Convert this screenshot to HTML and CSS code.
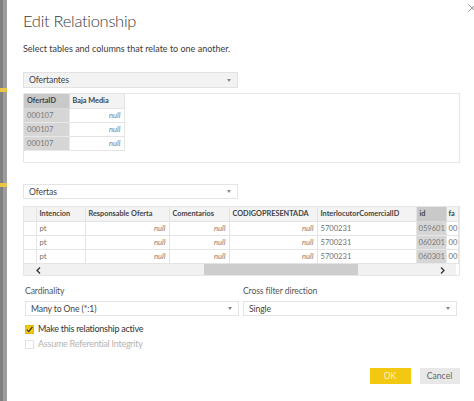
FILE: index.html
```html
<!DOCTYPE html>
<html lang="en">
<head>
<meta charset="utf-8">
<title>Edit Relationship</title>
<link rel="stylesheet" href="styles.css">
</head>
<body>
<div class="screen">
  <div class="side"></div>
  <div class="dialog">
    <button class="close" aria-label="Close">
      <svg width="8" height="8" viewBox="0 0 8 8"><path d="M0.5 0.5 L7.5 7.5 M7.5 0.5 L0.5 7.5" stroke="#8a8a8a" stroke-width="0.9" fill="none"/></svg>
    </button>
    <h1 class="title">Edit Relationship</h1>
    <p class="subtitle">Select tables and columns that relate to one another.</p>

    <div class="select select-active select-table">
      <span>Ofertantes</span>
      <svg class="caret" width="4" height="3" viewBox="0 0 4 3"><path d="M0 0 H4 L2 3 Z" fill="#888"/></svg>
    </div>
    <div class="preview preview-top">
      <table class="grid grid-top">
        <colgroup><col class="w45"><col class="w55"></colgroup>
        <thead><tr><th class="sel">OfertaID</th><th>Baja Media</th></tr></thead>
        <tbody>
          <tr><td class="sel">000107</td><td class="null">null</td></tr>
          <tr><td class="sel">000107</td><td class="null">null</td></tr>
          <tr><td class="sel">000107</td><td class="null">null</td></tr>
        </tbody>
      </table>
    </div>

    <div class="select select-table select-second">
      <span>Ofertas</span>
      <svg class="caret" width="4" height="3" viewBox="0 0 4 3"><path d="M0 0 H4 L2 3 Z" fill="#888"/></svg>
    </div>
    <div class="preview preview-bottom">
      <table class="grid grid-bottom">
        <colgroup>
          <col class="w12"><col class="w49"><col class="w84"><col class="w60"><col class="w88"><col class="w99"><col class="w30"><col class="w12">
        </colgroup>
        <thead><tr><th></th><th>Intencion</th><th>Responsable Oferta</th><th>Comentarios</th><th>CODIGOPRESENTADA</th><th>InterlocutorComercialID</th><th class="sel">id</th><th class="clip">fa</th></tr></thead>
        <tbody>
          <tr><td></td><td>pt</td><td class="null">null</td><td class="null">null</td><td class="null">null</td><td>5700231</td><td class="sel num">059601</td><td class="clip">00</td></tr>
          <tr><td></td><td>pt</td><td class="null">null</td><td class="null">null</td><td class="null">null</td><td>5700231</td><td class="sel num">060201</td><td class="clip">00</td></tr>
          <tr><td></td><td>pt</td><td class="null">null</td><td class="null">null</td><td class="null">null</td><td>5700231</td><td class="sel num">060301</td><td class="clip">00</td></tr>
        </tbody>
      </table>
      <div class="hscroll">
        <svg class="arrow" width="5" height="7" viewBox="0 0 5 7"><path d="M4 0.5 L1 3.5 L4 6.5" stroke="#333" stroke-width="1.3" fill="none"/></svg>
        <div class="thumb-space"></div>
        <div class="thumb"></div>
        <div class="thumb-rest"></div>
        <svg class="arrow" width="5" height="7" viewBox="0 0 5 7"><path d="M1 0.5 L4 3.5 L1 6.5" stroke="#333" stroke-width="1.3" fill="none"/></svg>
      </div>
    </div>

    <div class="options">
      <div class="field">
        <div class="label">Cardinality</div>
        <div class="select">
          <span>Many to One (*:1)</span>
          <svg class="caret" width="4" height="3" viewBox="0 0 4 3"><path d="M0 0 H4 L2 3 Z" fill="#888"/></svg>
        </div>
      </div>
      <div class="field">
        <div class="label">Cross filter direction</div>
        <div class="select">
          <span>Single</span>
          <svg class="caret" width="4" height="3" viewBox="0 0 4 3"><path d="M0 0 H4 L2 3 Z" fill="#888"/></svg>
        </div>
      </div>
    </div>

    <div class="check">
      <span class="box box-on"><svg width="9" height="9" viewBox="0 0 9 9"><path d="M1.8 4.6 L3.7 6.6 L7.4 2" stroke="#3a3a3a" stroke-width="1.3" fill="none"/></svg></span>
      <span class="check-text">Make this relationship active</span>
    </div>
    <div class="check check-disabled">
      <span class="box"></span>
      <span class="check-text">Assume Referential Integrity</span>
    </div>

    <div class="actions">
      <button class="btn btn-ok">OK</button>
      <button class="btn btn-cancel">Cancel</button>
    </div>
  </div>
</div>
</body>
</html>
```
FILE: styles.css
```css
* { box-sizing: border-box; }
html, body { margin: 0; padding: 0; }
body {
  width: 474px;
  height: 401px;
  overflow: hidden;
  background: #fff;
  font-family: "Lato", "Open Sans", sans-serif;
  color: #333;
}
.screen {
  display: flex;
  height: 401px;
}
.side {
  width: 7px;
  flex: none;
  background:
    linear-gradient(to bottom, transparent 0 88px, #e9c646 88px 92px, transparent 92px 183px, #e9c646 183px 187px, transparent 187px),
    linear-gradient(to right, #808080 0 3px, #9d9d9d 3px 7px);
}
.dialog {
  position: relative;
  flex: 1;
  padding: 10px 17px 0 16px;
}
.close {
  position: absolute;
  top: 4px;
  right: 1px;
  width: 8px;
  height: 8px;
  padding: 0;
  border: 0;
  background: none;
  display: flex;
  align-items: center;
  justify-content: center;
}
.title {
  margin: 0;
  font-size: 16.5px;
  line-height: 22px;
  font-weight: 300;
  letter-spacing: -0.3px;
  color: #3b3b3b;
}
.subtitle {
  margin: 10px 0 0;
  font-size: 9px;
  line-height: 13px;
  color: #3b3b3b;
}
.select {
  height: 15px;
  border: 1px solid #e4e4e4;
  background: #fff;
  display: flex;
  align-items: center;
  justify-content: space-between;
  padding: 0 6px 0 5px;
  font-size: 8.6px;
  letter-spacing: -0.1px;
  color: #444;
}
.select-table { width: 215px; }
.select-active { background: #f2f2f2; border-color: #e2e2e2; height: 16px; margin-top: 17px; }
.select-second { margin-top: 21px; }
.caret { flex: none; }
.preview {
  border: 1px solid #e6e6e6;
  background: #fff;
  margin-top: 5px;
  height: 70px;
  overflow: hidden;
}
.preview-bottom { margin-top: 7px; }
.grid {
  border-collapse: collapse;
  table-layout: fixed;
  font-size: 7.6px;
}
.grid-top { width: 100px; }
.grid-bottom { width: 432px; }
.w45 { width: 45px; } .w55 { width: 55px; }
.w12 { width: 12px; } .w49 { width: 49px; } .w84 { width: 84px; } .w60 { width: 60px; }
.w88 { width: 88px; } .w99 { width: 99px; } .w30 { width: 30px; }
.grid th, .grid td {
  height: 14px;
  padding: 0 3px;
  border: 1px solid #e4e4e4;
  white-space: nowrap;
  overflow: hidden;
  text-overflow: clip;
  text-align: left;
  line-height: 12px;
}
.grid tr:first-child th { border-top: 0; }
.grid th:first-child, .grid td:first-child { border-left: 0; }
.grid th {
  background: #f3f3f3;
  font-weight: 700;
  font-size: 7.3px;
  color: #444;
}
.grid td { color: #727272; }
.grid .null { text-align: right; font-style: italic; color: #808080; }
.grid th.sel { background: #c9c9c9; border-color: #d9d9d9; }
.grid td.sel { background: #d6d6d6; border-color: #e8e8e8; color: #7a7a7a; }
.grid td.num { text-align: right; padding: 0 2px; }
.grid .clip { padding: 0 0 0 2px; }
.hscroll {
  display: flex;
  align-items: center;
  height: 14px;
  width: 432px;
  background: #f1f1f1;
  padding: 0 11px 0 12px;
}
.thumb-space { width: 163px; }
.thumb { width: 154px; height: 14px; background: #cdcdcd; }
.thumb-rest { flex: 1; }
.options {
  display: grid;
  grid-template-columns: 214px 214px;
  column-gap: 4px;
  margin-top: 9px;
  padding-left: 2px;
}
.label {
  font-size: 8.6px;
  letter-spacing: -0.1px;
  line-height: 13px;
  color: #555;
  margin-bottom: 3px;
}
.check {
  display: flex;
  align-items: center;
  gap: 4px;
  padding-left: 2px;
  font-size: 9px;
  letter-spacing: -0.25px;
  line-height: 12px;
  color: #333;
  margin-top: 7px;
}
.check-disabled { margin-top: 3px; color: #b4b4b4; }
.box {
  width: 9px;
  height: 9px;
  flex: none;
  border: 1px solid #e2e2e2;
  background: #fff;
  display: flex;
}
.box-on { background: #f2c811; border-color: #e5bb05; }
.box-on svg { margin: -1px; }
.actions {
  display: flex;
  justify-content: flex-end;
  gap: 9px;
  margin-top: 18px;
}
.btn {
  height: 16px;
  border: 0;
  padding: 0;
  font-family: inherit;
  font-size: 8.6px;
}
.btn-ok { width: 41px; background: #f2c811; color: #f4efd4; }
.btn-cancel { width: 40px; background: #e8e8e8; color: #666; }
```
